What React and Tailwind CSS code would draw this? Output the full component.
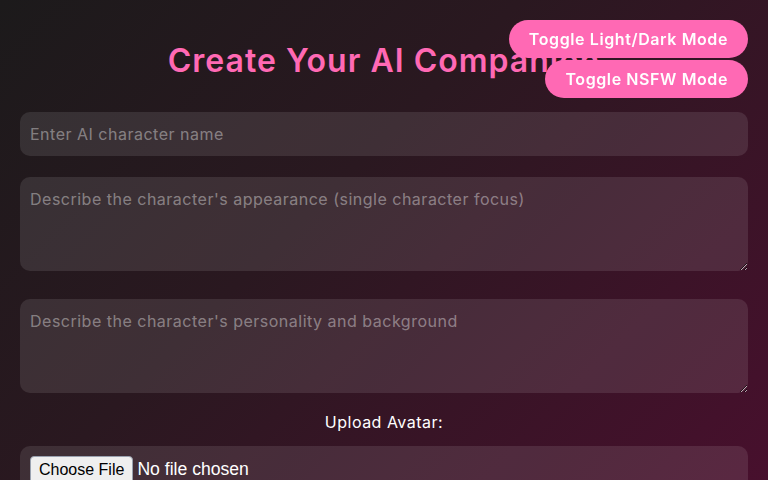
export default function App() {
  return (
    <div className="min-h-screen bg-[linear-gradient(135deg,#1c1a1b_0%,#2a1820_40%,#4a0f2e_100%)] px-5 pt-[41px] pb-10 font-['Inter',sans-serif] text-white">
      <div className="fixed top-5 right-5 flex flex-col items-end gap-0.5">
        <button className="h-[38px] rounded-full bg-[#ff69b4] px-5 text-base font-semibold tracking-[0.6px] text-white">
          Toggle Light/Dark Mode
        </button>
        <button className="h-[38px] rounded-full bg-[#ff69b4] px-5 text-base font-semibold tracking-[0.6px] text-white">
          Toggle NSFW Mode
        </button>
      </div>

      <h1 className="text-center text-[32px] leading-[40px] font-semibold tracking-[1px] text-[#ff69b4]">
        Create Your AI Companion
      </h1>

      <form className="mt-[31px] flex flex-col">
        <input
          type="text"
          placeholder="Enter AI character name"
          className="h-11 w-full rounded-[10px] bg-white/10 px-2.5 text-base tracking-[0.5px] text-white outline-none placeholder:text-white/40"
        />
        <textarea
          placeholder="Describe the character's appearance (single character focus)"
          className="mt-[21px] block h-[94px] w-full rounded-[10px] bg-white/10 px-2.5 py-2.5 text-base tracking-[0.5px] text-white outline-none placeholder:text-white/40"
        />
        <textarea
          placeholder="Describe the character's personality and background"
          className="mt-[28px] block h-[94px] w-full rounded-[10px] bg-white/10 px-2.5 py-2.5 text-base tracking-[0.5px] text-white outline-none placeholder:text-white/40"
        />
        <label className="mt-[17px] text-center text-base tracking-[0.5px]">Upload Avatar:</label>
        <div className="mt-[12px] rounded-[10px] bg-white/10 p-2.5">
          <input
            type="file"
            className="font-['Liberation_Sans',sans-serif] text-[17.6px] text-white file:mr-1 file:rounded-sm file:border file:border-gray-400 file:bg-[#efefef] file:px-2 file:py-px file:text-base file:text-black"
          />
        </div>
      </form>
    </div>
  );
}
